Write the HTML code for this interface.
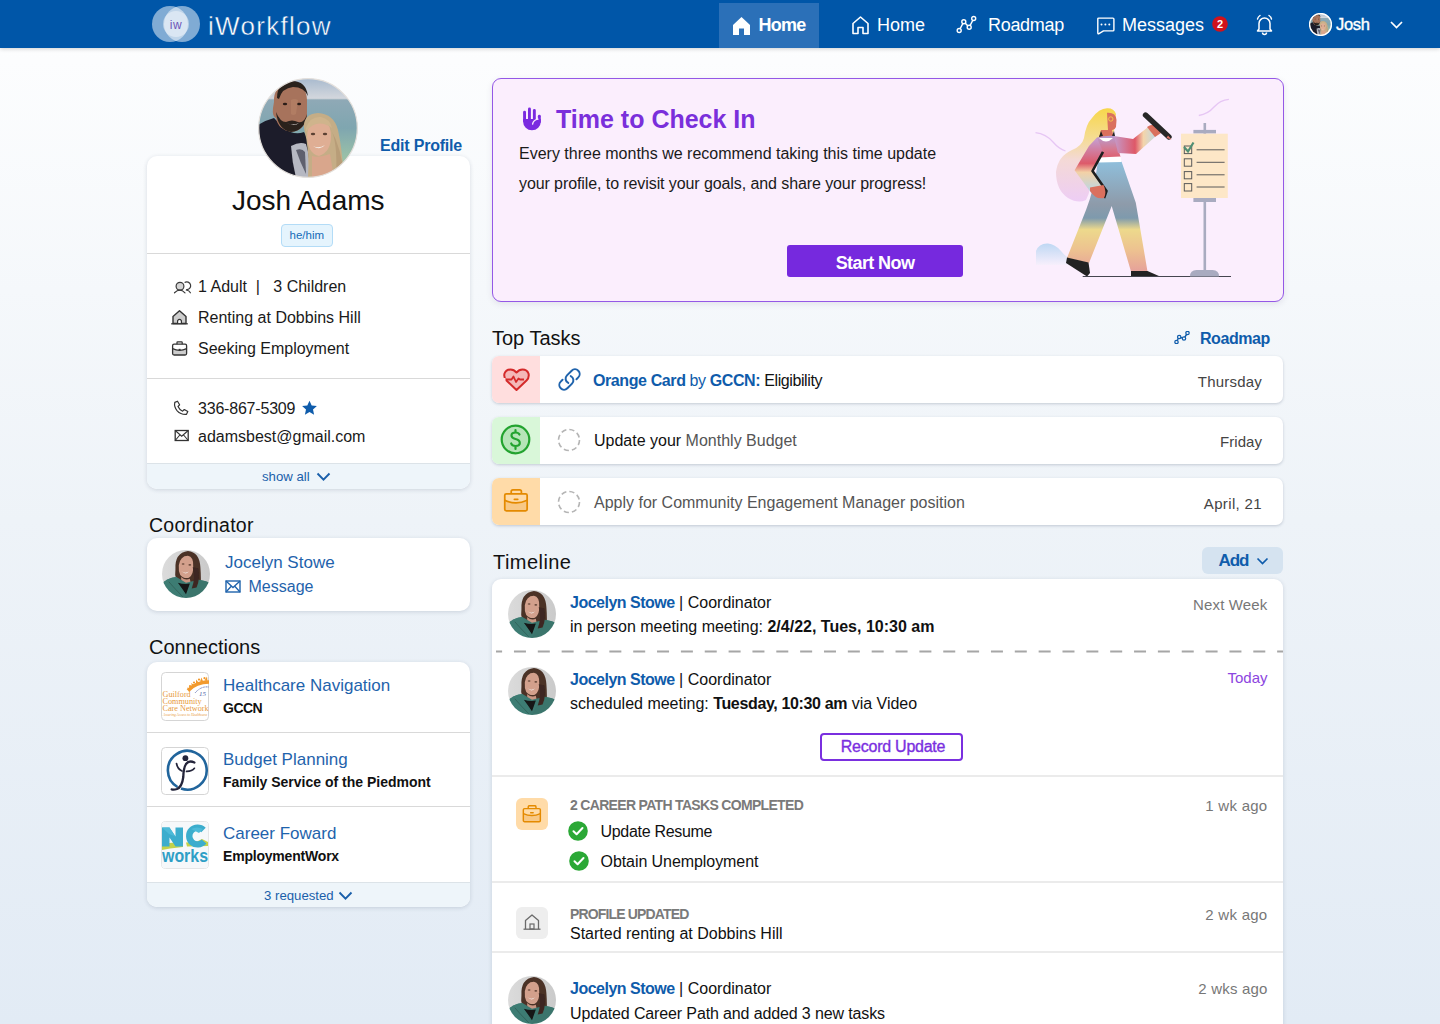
<!DOCTYPE html>
<html><head><meta charset="utf-8"><title>iWorkflow</title>
<style>
html,body{margin:0;padding:0;}
body{width:1440px;height:1024px;overflow:hidden;position:relative;font-family:"Liberation Sans", sans-serif;
background:linear-gradient(180deg,#FFFFFF 0px,#FCFDFE 60px,#EEF3F8 520px,#E2EBF5 1024px);}
.t{position:absolute;white-space:nowrap;line-height:1;}
.card{position:absolute;background:#fff;border-radius:10px;box-shadow:0 1px 4px rgba(30,50,80,0.16);overflow:hidden;}
</style></head><body>

<div style="position:absolute;left:0px;top:0px;width:1440px;height:48px;background:#0056A8;box-shadow:0 1px 4px rgba(0,0,0,0.18);"></div>
<svg style="position:absolute;left:150px;top:4px;" width="54" height="40" viewBox="0 0 54 40">
<circle cx="20" cy="20" r="18" fill="#fff" fill-opacity="0.5"/>
<circle cx="32" cy="20" r="18" fill="#fff" fill-opacity="0.5"/>
<circle cx="26" cy="20" r="13" fill="#fff" fill-opacity="0.42"/>
<text x="26" y="24.5" text-anchor="middle" font-family="Liberation Sans" font-size="12" fill="#6E56B8" letter-spacing="0.5">iw</text>
</svg>
<div class="t" style="top:12.99px;font-size:26px;font-weight:400;color:#FFFFFF;letter-spacing:1.3px;left:208px;-webkit-text-stroke:0.45px #0056A8;">iWorkflow</div>
<div style="position:absolute;left:719px;top:3px;width:100px;height:45px;background:#2B70B8;"></div>
<svg style="position:absolute;left:733px;top:17px;" width="17" height="18" viewBox="0 0 17 18"><path d="M8.5 0 L17 8 V18 H11 V11.5 H6 V18 H0 V8 Z" fill="#fff"/></svg>
<div class="t" style="top:16.36px;font-size:18px;font-weight:700;color:#fff;letter-spacing:-0.75px;left:758.5px;">Home</div>
<svg style="position:absolute;left:851px;top:15px;" width="19" height="20" viewBox="0 0 19 20"><path d="M2 8.5 L9.5 2 L17 8.5 V18.5 H12 V12.5 H7 V18.5 H2 Z" fill="none" stroke="#fff" stroke-width="1.6" stroke-linejoin="round"/></svg>
<div class="t" style="top:16.36px;font-size:18px;font-weight:400;color:#fff;left:877px;">Home</div>
<svg style="position:absolute;left:955px;top:15px;" width="22" height="20" viewBox="0 0 22 20"><polyline points="4.2,15.5 8.8,6.7 14.2,12.3 18.7,3.5" fill="none" stroke="#fff" stroke-width="1.5"/>
<circle cx="4.2" cy="15.5" r="2" fill="#0056A8" stroke="#fff" stroke-width="1.4"/>
<circle cx="8.8" cy="6.7" r="2" fill="#0056A8" stroke="#fff" stroke-width="1.4"/>
<circle cx="14.2" cy="12.3" r="2" fill="#0056A8" stroke="#fff" stroke-width="1.4"/>
<circle cx="18.7" cy="3.5" r="2" fill="#0056A8" stroke="#fff" stroke-width="1.4"/></svg>
<div class="t" style="top:16.36px;font-size:18px;font-weight:400;color:#fff;letter-spacing:-0.3px;left:988px;">Roadmap</div>
<svg style="position:absolute;left:1096px;top:16px;" width="19" height="19" viewBox="0 0 19 19"><path d="M1.8 3.1 Q1.8 2.1 2.8 2.1 H16.9 Q17.9 2.1 17.9 3.1 V13.9 Q17.9 14.9 16.9 14.9 H7.5 L3 17.6 Q1.8 18.2 1.8 17 Z" fill="none" stroke="#fff" stroke-width="1.4" stroke-linejoin="round"/>
<circle cx="5.5" cy="8.5" r="1" fill="#fff"/><circle cx="9.4" cy="8.5" r="1" fill="#fff"/><circle cx="13.3" cy="8.5" r="1" fill="#fff"/></svg>
<div class="t" style="top:16.36px;font-size:18px;font-weight:400;color:#fff;left:1122px;">Messages</div>
<svg style="position:absolute;left:1212px;top:16px;" width="16" height="16" viewBox="0 0 16 16"><circle cx="8" cy="8" r="7.8" fill="#D0121B"/><text x="8" y="12" text-anchor="middle" font-family="Liberation Sans" font-weight="700" font-size="11" fill="#fff">2</text></svg>
<svg style="position:absolute;left:1254px;top:14px;" width="21" height="22" viewBox="0 0 21 22"><path d="M5 15 V9.5 A5.5 5.5 0 0 1 16 9.5 V15 L17.5 17 H3.5 Z" fill="none" stroke="#fff" stroke-width="1.5" stroke-linejoin="round"/>
<path d="M8.5 18.5 A2 2 0 0 0 12.5 18.5" fill="none" stroke="#fff" stroke-width="1.5"/>
<path d="M3.5 5 A6 6 0 0 1 6 1.5 M17.5 5 A6 6 0 0 0 15 1.5" fill="none" stroke="#fff" stroke-width="1.4" stroke-linecap="round"/></svg>
<svg style="position:absolute;left:1308.5px;top:12.5px;" width="23" height="23" viewBox="0 0 100 100"><defs><clipPath id="cjs"><circle cx="50" cy="50" r="49.5"/></clipPath><filter id="fbs" x="-5%" y="-5%" width="110%" height="110%"><feGaussianBlur stdDeviation="0.55"/></filter>
<linearGradient id="skys" x1="0" y1="0" x2="0" y2="1"><stop offset="0" stop-color="#9DB2CA"/><stop offset="0.23" stop-color="#D3D7DD"/><stop offset="0.245" stop-color="#8FA9B6"/><stop offset="0.5" stop-color="#7FA6B0"/><stop offset="0.75" stop-color="#98BFA8"/><stop offset="1" stop-color="#A8CBA9"/></linearGradient></defs>
<g clip-path="url(#cjs)"><g filter="url(#fbs)">
<rect x="-5" y="-5" width="110" height="110" fill="url(#skys)"/>
<path d="M0 47 Q8 42 16 40 L26 50 Q36 58 46 54 L50 62 Q53 80 53 100 H0 Z" fill="#1D1C2A"/>
<path d="M33 68 Q42 63 48 66 Q52 78 52 100 H38 Q34 84 33 68 Z" fill="#B6B8C2"/>
<path d="M38 72 Q44 70 47 74 L48 96 Q42 84 38 72 Z" fill="#5E606E"/>
<path d="M16 24 Q15 8 32 4 Q48 4 49 22 L49 38 Q47 52 34 54 Q20 52 18 40 Q14 38 15 30 Z" fill="#A7735B"/>
<path d="M19 20 Q19 4 34 3 Q48 3 50 18 Q46 9 35 9 Q24 10 21 21 Z" fill="#2B221E"/>
<path d="M18 34 Q20 52 33 54 Q47 53 49 36 Q46 46 40 44 Q34 41 28 44 Q22 44 18 34 Z" fill="#2B231F"/>
<path d="M29 45 Q34 48 41 45 Q36 49 29 45 Z" fill="#F2EEE8"/>
<path d="M46 50 Q45 36 60 35 Q76 36 80 52 Q84 70 86 100 H50 Q52 74 46 50 Z" fill="#C5AD86"/>
<path d="M49 58 Q50 42 61 42 Q73 43 73 58 Q73 74 61 78 Q50 76 49 58 Z" fill="#DFAE94"/>
<path d="M48 50 Q52 38 63 39 Q72 41 74 50 Q66 44 58 46 Q52 48 48 54 Z" fill="#CFB48C"/>
<path d="M55 68 Q61 71 67 67 Q62 73 55 68 Z" fill="#F5F0EC"/>
<path d="M54 78 Q61 80 72 76 L76 100 H54 Z" fill="#D9A68C"/>
<path d="M72 50 Q80 62 78 100 H86 Q84 70 72 50 Z" fill="#B89D78"/>
<ellipse cx="27" cy="26" rx="2.2" ry="1.3" fill="#2A1E18"/><ellipse cx="41" cy="26" rx="2.2" ry="1.3" fill="#2A1E18"/>
<ellipse cx="55" cy="56" rx="2.2" ry="1.2" fill="#5A3F30"/><ellipse cx="67" cy="56" rx="2.2" ry="1.2" fill="#5A3F30"/>
<path d="M33 22 Q36 20 40 22 L38 36 Q35 38 33 36 Z" fill="#B8846A" opacity="0.6"/>
</g></g><circle cx="50" cy="50" r="49.3" fill="none" stroke="#E4E0DC" stroke-width="1.2"/><circle cx="50" cy="50" r="47.5" fill="none" stroke="#fff" stroke-width="6"/></svg>
<div class="t" style="top:16.23px;font-size:16.5px;font-weight:400;color:#fff;letter-spacing:-0.3px;left:1336px;-webkit-text-stroke:0.4px #fff;">Josh</div>
<svg style="position:absolute;left:1389px;top:20px;" width="15" height="10" viewBox="0 0 15 10"><polyline points="2,2 7.5,7.5 13,2" fill="none" stroke="#fff" stroke-width="1.7"/></svg>
<div class="card" style="left:147px;top:156px;width:323px;height:333px;"></div>
<div style="position:absolute;left:147px;top:463px;width:323px;height:26px;background:#EEF5FA;border-top:1px solid #DCE3E8;border-radius:0 0 10px 10px;box-sizing:border-box;"></div>
<div style="position:absolute;left:147px;top:253px;width:323px;height:1px;background:#D9D9D9;"></div>
<div style="position:absolute;left:147px;top:378px;width:323px;height:1px;background:#D9D9D9;"></div>
<svg style="position:absolute;left:258px;top:78px;" width="100" height="100" viewBox="0 0 100 100"><defs><clipPath id="cjb"><circle cx="50" cy="50" r="49.5"/></clipPath><filter id="fbb" x="-5%" y="-5%" width="110%" height="110%"><feGaussianBlur stdDeviation="0.55"/></filter>
<linearGradient id="skyb" x1="0" y1="0" x2="0" y2="1"><stop offset="0" stop-color="#9DB2CA"/><stop offset="0.23" stop-color="#D3D7DD"/><stop offset="0.245" stop-color="#8FA9B6"/><stop offset="0.5" stop-color="#7FA6B0"/><stop offset="0.75" stop-color="#98BFA8"/><stop offset="1" stop-color="#A8CBA9"/></linearGradient></defs>
<g clip-path="url(#cjb)"><g filter="url(#fbb)">
<rect x="-5" y="-5" width="110" height="110" fill="url(#skyb)"/>
<path d="M0 47 Q8 42 16 40 L26 50 Q36 58 46 54 L50 62 Q53 80 53 100 H0 Z" fill="#1D1C2A"/>
<path d="M33 68 Q42 63 48 66 Q52 78 52 100 H38 Q34 84 33 68 Z" fill="#B6B8C2"/>
<path d="M38 72 Q44 70 47 74 L48 96 Q42 84 38 72 Z" fill="#5E606E"/>
<path d="M16 24 Q15 8 32 4 Q48 4 49 22 L49 38 Q47 52 34 54 Q20 52 18 40 Q14 38 15 30 Z" fill="#A7735B"/>
<path d="M19 20 Q19 4 34 3 Q48 3 50 18 Q46 9 35 9 Q24 10 21 21 Z" fill="#2B221E"/>
<path d="M18 34 Q20 52 33 54 Q47 53 49 36 Q46 46 40 44 Q34 41 28 44 Q22 44 18 34 Z" fill="#2B231F"/>
<path d="M29 45 Q34 48 41 45 Q36 49 29 45 Z" fill="#F2EEE8"/>
<path d="M46 50 Q45 36 60 35 Q76 36 80 52 Q84 70 86 100 H50 Q52 74 46 50 Z" fill="#C5AD86"/>
<path d="M49 58 Q50 42 61 42 Q73 43 73 58 Q73 74 61 78 Q50 76 49 58 Z" fill="#DFAE94"/>
<path d="M48 50 Q52 38 63 39 Q72 41 74 50 Q66 44 58 46 Q52 48 48 54 Z" fill="#CFB48C"/>
<path d="M55 68 Q61 71 67 67 Q62 73 55 68 Z" fill="#F5F0EC"/>
<path d="M54 78 Q61 80 72 76 L76 100 H54 Z" fill="#D9A68C"/>
<path d="M72 50 Q80 62 78 100 H86 Q84 70 72 50 Z" fill="#B89D78"/>
<ellipse cx="27" cy="26" rx="2.2" ry="1.3" fill="#2A1E18"/><ellipse cx="41" cy="26" rx="2.2" ry="1.3" fill="#2A1E18"/>
<ellipse cx="55" cy="56" rx="2.2" ry="1.2" fill="#5A3F30"/><ellipse cx="67" cy="56" rx="2.2" ry="1.2" fill="#5A3F30"/>
<path d="M33 22 Q36 20 40 22 L38 36 Q35 38 33 36 Z" fill="#B8846A" opacity="0.6"/>
</g></g><circle cx="50" cy="50" r="49.3" fill="none" stroke="#E4E0DC" stroke-width="1.2"/></svg>
<div class="t" style="top:138.46px;font-size:16px;font-weight:700;color:#0F5CAB;letter-spacing:-0.2px;left:380px;">Edit Profile</div>
<div class="t" style="top:187.30px;font-size:28px;font-weight:400;color:#111;left:232px;">Josh Adams</div>
<div style="position:absolute;left:281px;top:224px;width:51.5px;height:23px;background:#E5F4FD;border:1px solid #B3DCF7;border-radius:4px;box-sizing:border-box;"></div>
<div class="t" style="top:230.27px;font-size:11.5px;font-weight:400;color:#156BB8;left:306.8px;transform:translateX(-50%);">he/him</div>
<svg style="position:absolute;left:172px;top:280px;" width="20" height="15" viewBox="0 0 20 15"><circle cx="8" cy="6.2" r="3.9" fill="#D4D4D4" stroke="#3A3A3A" stroke-width="1.2"/>
<path d="M2.5 12.8 Q7.8 7.6 13 12.8" fill="none" stroke="#3A3A3A" stroke-width="1.2" stroke-linecap="round"/>
<path d="M12.6 2.5 A3.9 3.9 0 1 1 14.2 9.6" fill="none" stroke="#3A3A3A" stroke-width="1.2"/>
<path d="M14.3 10 Q17.2 10.4 18.4 12.8" fill="none" stroke="#3A3A3A" stroke-width="1.2" stroke-linecap="round"/></svg>
<div class="t" style="top:279.46px;font-size:16px;font-weight:400;color:#1A1A1A;left:198px;">1 Adult&nbsp;&nbsp;|&nbsp;&nbsp;&nbsp;3 Children</div>
<svg style="position:absolute;left:170px;top:309px;" width="19" height="16" viewBox="0 0 19 16"><path d="M3 14.5 V7.6 L9.5 1.8 L16 7.6 V14.5 Z" fill="#CDCDCD" stroke="#333" stroke-width="1.4" stroke-linejoin="round"/>
<path d="M7.6 14.5 V11.6 Q9.5 9.3 11.4 11.6 V14.5" fill="#fff" stroke="#333" stroke-width="1.2"/>
<line x1="1.2" y1="14.8" x2="17.8" y2="14.8" stroke="#333" stroke-width="1.3"/></svg>
<div class="t" style="top:310.46px;font-size:16px;font-weight:400;color:#1A1A1A;left:198px;">Renting at Dobbins Hill</div>
<svg style="position:absolute;left:171px;top:341px;" width="17" height="15" viewBox="0 0 17 15"><rect x="1.6" y="3.2" width="14" height="10.8" rx="1.5" fill="#fff"/>
<path d="M1.6 7.6 Q8.6 11 15.6 7.6 V13 Q15.6 14 14.6 14 H2.6 Q1.6 14 1.6 13 Z" fill="#CDCDCD"/>
<rect x="1.6" y="3.2" width="14" height="10.8" rx="1.5" fill="none" stroke="#333" stroke-width="1.3"/>
<path d="M1.6 7.6 Q8.6 11 15.6 7.6" fill="none" stroke="#333" stroke-width="1.2"/>
<path d="M6 3.2 V1.3 Q6 0.8 6.6 0.8 H10.6 Q11.2 0.8 11.2 1.3 V3.2" fill="none" stroke="#333" stroke-width="1.2"/>
<line x1="7.6" y1="8.6" x2="9.6" y2="8.6" stroke="#333" stroke-width="1.5"/></svg>
<div class="t" style="top:341.46px;font-size:16px;font-weight:400;color:#1A1A1A;left:198px;">Seeking Employment</div>
<svg style="position:absolute;left:173px;top:400px;" width="16" height="16" viewBox="0 0 16 16"><path d="M4.5 1.2 L6.6 4.8 L5 6.5 Q6.5 9.8 9.6 11.2 L11.3 9.5 L14.8 11.6 L13.5 14.3 Q8 14.8 4.2 10.8 Q0.8 6.8 1.8 2.4 Z" fill="none" stroke="#333" stroke-width="1.2" stroke-linejoin="round"/></svg>
<div class="t" style="top:401.46px;font-size:16px;font-weight:400;color:#1A1A1A;letter-spacing:-0.2px;left:198px;">336-867-5309</div>
<svg style="position:absolute;left:301px;top:400px;" width="17" height="16" viewBox="0 0 17 16"><path d="M8.5 0.8 L10.7 5.6 L15.9 6.1 L12 9.6 L13.1 14.8 L8.5 12.1 L3.9 14.8 L5 9.6 L1.1 6.1 L6.3 5.6 Z" fill="#0F5CAB"/></svg>
<svg style="position:absolute;left:174px;top:429px;" width="16" height="13" viewBox="0 0 16 13"><rect x="1.2" y="1.5" width="13" height="10" fill="none" stroke="#333" stroke-width="1.3"/>
<path d="M1.2 1.5 L7.7 7.2 L14.2 1.5 M1.2 11.5 L5.8 6 M14.2 11.5 L9.6 6" fill="none" stroke="#333" stroke-width="1.1"/></svg>
<div class="t" style="top:429.46px;font-size:16px;font-weight:400;color:#1A1A1A;left:198px;">adamsbest@gmail.com</div>
<div class="t" style="top:469.83px;font-size:13.2px;font-weight:400;color:#1A5FAA;left:262px;">show all</div>
<svg style="position:absolute;left:316px;top:472px;" width="15" height="10" viewBox="0 0 15 10"><polyline points="1.5,1.5 7.5,7.6 13.5,1.5" fill="none" stroke="#1A5FAA" stroke-width="1.9"/></svg>
<div class="t" style="top:516.49px;font-size:19.5px;font-weight:400;color:#111;letter-spacing:0.25px;left:149px;">Coordinator</div>
<div class="card" style="left:147px;top:538px;width:323px;height:73px;"></div>
<svg style="position:absolute;left:162px;top:550px;" width="48" height="48" viewBox="0 0 100 100"><defs><clipPath id="cc1"><circle cx="50" cy="50" r="50"/></clipPath><filter id="fj1" x="-5%" y="-5%" width="110%" height="110%"><feGaussianBlur stdDeviation="0.55"/></filter>
<linearGradient id="jbg1" x1="0" y1="0" x2="1" y2="0"><stop offset="0" stop-color="#DCDCDC"/><stop offset="1" stop-color="#C9C9C9"/></linearGradient></defs>
<g clip-path="url(#cc1)"><g filter="url(#fj1)">
<rect x="-5" y="-5" width="110" height="110" fill="url(#jbg1)"/>
<path d="M28 40 Q26 6 54 2 Q78 4 80 36 Q82 62 80 80 L62 78 Q50 70 40 66 L30 62 Q26 52 28 40 Z" fill="#4B3227"/>
<path d="M35 32 Q38 12 54 12 Q66 14 65 34 Q66 52 56 58 Q44 60 38 52 Q34 44 35 32 Z" fill="#D3A08C"/>
<path d="M40 44 Q48 50 56 45 Q50 53 40 44 Z" fill="#F4EDEA"/>
<ellipse cx="44" cy="29" rx="3" ry="1.6" fill="#6B4A3C"/><ellipse cx="58" cy="31" rx="3" ry="1.6" fill="#6B4A3C"/>
<path d="M40 56 Q48 64 58 60 L60 70 L40 70 Z" fill="#C89582"/>
<path d="M0 100 V70 Q10 58 30 56 L50 68 L76 62 Q90 64 100 68 V100 Z" fill="#3C7870"/>
<path d="M0 70 Q10 58 30 56 L40 70 L46 100 H0 Z" fill="#3E7C73"/>
<path d="M100 68 Q90 64 76 62 L62 76 L50 100 H100 Z" fill="#3A746C"/>
<path d="M33 68 Q46 72 58 70 L50 92 Q42 80 33 68 Z" fill="#121212"/>
<path d="M64 36 Q70 60 62 80 L72 78 Q80 60 76 38 Z" fill="#3D2820"/>
<path d="M14 66 Q26 80 44 98" stroke="#2C5A54" stroke-width="1.5" fill="none"/>
</g></g></svg>
<div class="t" style="top:553.61px;font-size:17px;font-weight:400;color:#1F63AC;left:225px;">Jocelyn Stowe</div>
<svg style="position:absolute;left:225px;top:580px;" width="16" height="13" viewBox="0 0 16 13"><rect x="1" y="1" width="14" height="11" fill="none" stroke="#1F63AC" stroke-width="1.4"/>
<path d="M1 1 L8 7.5 L15 1 M1 12 L6 6.5 M15 12 L10 6.5" fill="none" stroke="#1F63AC" stroke-width="1.3"/></svg>
<div class="t" style="top:579.46px;font-size:16px;font-weight:400;color:#1F63AC;left:248.5px;">Message</div>
<div class="t" style="top:637.37px;font-size:20px;font-weight:400;color:#111;left:149px;">Connections</div>
<div class="card" style="left:147px;top:662px;width:323px;height:245px;"></div>
<div style="position:absolute;left:147px;top:882px;width:323px;height:25px;background:#EEF5FA;border-top:1px solid #DCE3E8;border-radius:0 0 10px 10px;box-sizing:border-box;"></div>
<div style="position:absolute;left:147px;top:732px;width:323px;height:1px;background:#D9D9D9;"></div>
<div style="position:absolute;left:147px;top:806px;width:323px;height:1px;background:#D9D9D9;"></div>
<svg style="position:absolute;left:161px;top:672px;" width="48" height="49" viewBox="0 0 48 49"><rect x="0.5" y="0.5" width="47" height="48" rx="4" fill="#fff" stroke="#D5D5D5"/>
<path d="M27 18.5 Q35 10 48 10" fill="none" stroke="#F29A2E" stroke-width="3.6"/>
<g fill="#F29A2E"><path d="M26 15.5 L30 17 L28 19 Z"/><path d="M30 11 L34 13.5 L31.5 15 Z"/><path d="M35 7.5 L38 11 L35 12 Z"/><path d="M40.5 5.5 L42 9.5 L39 9.5 Z"/><path d="M46 4.5 L46.5 9 L43.5 8.5 Z"/>
<circle cx="29" cy="14.2" r="1.1"/><circle cx="33" cy="10.5" r="1.1"/><circle cx="38" cy="7.6" r="1.1"/><circle cx="43.5" cy="6.2" r="1.1"/></g>
<path d="M34 21 Q40 14 47.5 15" fill="none" stroke="#5563A8" stroke-width="0.9" stroke-dasharray="1 0.6"/>
<text x="41.5" y="23.5" text-anchor="middle" font-family="Liberation Serif" font-style="italic" font-size="7" fill="#4B5DA8">15</text>
<g font-family="Liberation Serif" font-size="8.2" fill="#E79A3C">
<text x="1.5" y="25">Guilford</text><text x="1.5" y="32">Community</text><text x="1.5" y="39">Care Network</text></g>
<text x="2" y="43.5" font-family="Liberation Serif" font-style="italic" font-size="3.2" fill="#E79A3C" textLength="44" lengthAdjust="spacingAndGlyphs">Assuring Access to Healthcare</text></svg>
<div class="t" style="top:676.61px;font-size:17px;font-weight:400;color:#1F63AC;left:223px;">Healthcare Navigation</div>
<div class="t" style="top:701.45px;font-size:14px;font-weight:700;color:#111;letter-spacing:-0.5px;left:223px;">GCCN</div>
<svg style="position:absolute;left:161px;top:747px;" width="48" height="48" viewBox="0 0 48 48"><rect x="0.5" y="0.5" width="47" height="47" rx="4" fill="#fff" stroke="#D5D5D5"/>
<path d="M16.5 40 A19.4 19.4 0 1 1 20 41.6" fill="none" stroke="#21659C" stroke-width="2.6"/>
<circle cx="24.4" cy="11.2" r="2.9" fill="#23243A"/>
<path d="M15.5 16.5 Q16.5 22 21 24" fill="none" stroke="#23243A" stroke-width="1.7" stroke-linecap="round"/>
<path d="M25.5 24.4 Q31 24.5 33.4 21.3" fill="none" stroke="#23243A" stroke-width="1.7" stroke-linecap="round"/>
<path d="M33.4 15.5 Q28 13 25 17 Q22.5 21 22.3 30 Q21 40 16 42 Q13 43 10.7 42.4" fill="none" stroke="#23243A" stroke-width="2.3" stroke-linecap="round"/></svg>
<div class="t" style="top:750.61px;font-size:17px;font-weight:400;color:#1F63AC;left:223px;">Budget Planning</div>
<div class="t" style="top:775.45px;font-size:14px;font-weight:700;color:#111;left:223px;">Family Service of the Piedmont</div>
<svg style="position:absolute;left:161px;top:821px;" width="48" height="48" viewBox="0 0 48 48"><defs><clipPath id="ncc"><rect x="0.5" y="0.5" width="47" height="47" rx="4"/></clipPath></defs>
<rect x="0.5" y="0.5" width="47" height="47" rx="4" fill="#fff" stroke="#D5D5D5"/>
<g clip-path="url(#ncc)">
<rect x="0" y="0" width="48" height="48" fill="#F6F8FA"/>
<path d="M1 22.5 L22 21 L22 26 L9 27.5 L1 29 Z" fill="#C3D24A"/>
<path d="M25 21.5 L36 20.5 L41 18 L47 21 L47 25 L26 25.5 Z" fill="#C3D24A"/>
<path d="M1 6.5 H8.5 L14.5 15.5 V6.5 H22 V25.5 H14.5 L8.5 16.5 V25.5 H1 Z" fill="#3CADCD"/>
<path d="M1 6.5 H8.5 L14.5 15.5 L8 13 Z" fill="#4DBAD8"/>
<path d="M42.5 9 A8.4 8.4 0 1 0 43 20.5" fill="none" stroke="#3CADCD" stroke-width="6.4"/>
<path d="M30 8 Q36 5 42 8 L38 12 Z" fill="#4DBAD8"/>
<text x="1" y="41" font-family="Liberation Sans" font-weight="700" font-size="18.5" fill="#2E9FC6" textLength="46" lengthAdjust="spacingAndGlyphs">works</text></g></svg>
<div class="t" style="top:824.61px;font-size:17px;font-weight:400;color:#1F63AC;left:223px;">Career Foward</div>
<div class="t" style="top:849.45px;font-size:14px;font-weight:700;color:#111;letter-spacing:-0.2px;left:223px;">EmploymentWorx</div>
<div class="t" style="top:888.63px;font-size:13.2px;font-weight:400;color:#1A5FAA;left:264px;">3 requested</div>
<svg style="position:absolute;left:338px;top:891px;" width="15" height="10" viewBox="0 0 15 10"><polyline points="1.5,1.5 7.5,7.6 13.5,1.5" fill="none" stroke="#1A5FAA" stroke-width="1.9"/></svg>
<div style="position:absolute;left:492px;top:78px;width:792px;height:224px;background:#FBEEFD;border:1.8px solid #9458E6;border-radius:9px;box-sizing:border-box;box-shadow:0 2px 6px rgba(60,40,90,0.10);"></div>
<svg style="position:absolute;left:520px;top:106px;" width="23" height="26" viewBox="0 0 23 26"><g stroke="#7A2AE0" stroke-width="2.9" stroke-linecap="round"><line x1="4.55" y1="6.3" x2="4.55" y2="15"/><line x1="9.45" y1="2.9" x2="9.45" y2="14"/><line x1="14.35" y1="4.4" x2="14.35" y2="14"/><line x1="19.35" y1="10.3" x2="19.35" y2="16"/></g>
<path d="M3.1 13 L3.1 15.4 A8.85 8.85 0 0 0 20.8 15.4 L20.8 13 Z" fill="#7A2AE0"/>
<path d="M18 13.2 Q13.2 14.2 12.6 18.2" fill="none" stroke="#FBEEFD" stroke-width="1.3" stroke-linecap="round"/></svg>
<div class="t" style="top:107.14px;font-size:25px;font-weight:700;color:#7A2FDB;left:556px;">Time to Check In</div>
<div class="t" style="top:146.46px;font-size:16px;font-weight:400;color:#1A1A1A;left:519px;">Every three months we recommend taking this time update</div>
<div class="t" style="top:176.46px;font-size:16px;font-weight:400;color:#1A1A1A;letter-spacing:-0.09px;left:519px;">your profile, to revisit your goals, and share your progress!</div>
<div style="position:absolute;left:787px;top:245px;width:176px;height:32px;background:#7629DE;border-radius:3px;"></div>
<div class="t" style="top:254.16px;font-size:18px;font-weight:700;color:#fff;letter-spacing:-0.6px;left:875px;transform:translateX(-50%);">Start Now</div>
<svg style="position:absolute;left:1030px;top:90px;" width="210" height="195" viewBox="1030 90 210 195"><defs>
<linearGradient id="gPants" x1="0" y1="160" x2="0" y2="276" gradientUnits="userSpaceOnUse">
<stop offset="0" stop-color="#8FC0DD"/><stop offset="0.38" stop-color="#8E9BAA"/><stop offset="0.5" stop-color="#7E9AAD"/>
<stop offset="0.6" stop-color="#EDD98C"/><stop offset="0.78" stop-color="#EDC190"/><stop offset="1" stop-color="#E49A9C"/></linearGradient>
<linearGradient id="gTop" x1="0" y1="136" x2="0" y2="160" gradientUnits="userSpaceOnUse">
<stop offset="0" stop-color="#B79BD0"/><stop offset="0.55" stop-color="#D67990"/><stop offset="1" stop-color="#DE5A69"/></linearGradient>
<linearGradient id="gLArm" x1="0" y1="140" x2="0" y2="192" gradientUnits="userSpaceOnUse">
<stop offset="0" stop-color="#C79ACB"/><stop offset="0.45" stop-color="#DD5A6A"/><stop offset="0.62" stop-color="#F3D1A6"/><stop offset="1" stop-color="#B9D7E8"/></linearGradient>
<linearGradient id="gArm" x1="1114" y1="0" x2="1156" y2="0" gradientUnits="userSpaceOnUse">
<stop offset="0" stop-color="#C59AC9"/><stop offset="0.5" stop-color="#DE5868"/><stop offset="0.7" stop-color="#F4D4AA"/><stop offset="1" stop-color="#BFD9E5"/></linearGradient>
<linearGradient id="gHair" x1="0" y1="108" x2="0" y2="202" gradientUnits="userSpaceOnUse">
<stop offset="0" stop-color="#F7D64A"/><stop offset="0.3" stop-color="#F5DC8E"/><stop offset="0.55" stop-color="#F4D9D6"/><stop offset="1" stop-color="#EDCDF5"/></linearGradient>
<linearGradient id="gCloud" x1="0" y1="243" x2="0" y2="265" gradientUnits="userSpaceOnUse">
<stop offset="0" stop-color="#BDD7F3"/><stop offset="1" stop-color="#F7EFFC"/></linearGradient>
</defs>
<path d="M1035.5 132.7 Q1046 134 1053 142 Q1059 149 1065.5 151" fill="none" stroke="#E6C6F4" stroke-width="1.3"/>
<path d="M1198.8 115.5 Q1208 114 1214 107 Q1220 100 1228.9 99.3" fill="none" stroke="#E6C6F4" stroke-width="1.3"/>
<path d="M1036 265 V251 Q1039 243 1048 243.5 Q1055 244 1061 251 Q1065 256 1070 259 V265 Z" fill="url(#gCloud)"/>
<path d="M1107 108.3 Q1114 108 1116 114 L1114 132 Q1100 140 1094 150 Q1090 158 1090 170 Q1092 190 1086 200 Q1078 204 1068 198 Q1056 190 1056 172 Q1058 156 1072 150 Q1082 146 1084 138 Q1086 124 1092 118 Q1099 108.5 1107 108.3 Z" fill="url(#gHair)"/>
<path d="M1107 112.7 Q1116 112 1116.5 120 L1116 127 Q1114 131 1108 130.3 Z" fill="#DA705E"/>
<circle cx="1110.8" cy="119" r="2.2" fill="none" stroke="#F4C94A" stroke-width="0.9"/>
<path d="M1101 130 L1112 130 L1114 138 L1099 138 Z" fill="#DA705E"/>
<path d="M1101 131 L1099 137 L1103 136 Z M1112 136 L1114 131 L1115 136 Z" fill="#222"/>
<path d="M1097 137.5 Q1106 135 1115 136 L1120.5 157 L1099 159 Q1092 150 1097 137.5 Z" fill="url(#gTop)"/>
<path d="M1099 138 Q1106 145 1113 138 Z" fill="#FFFFFF"/>
<path d="M1114 136 L1133 139 L1147.5 127.5 L1156 136 L1136 154 L1118 153 Z" fill="url(#gArm)"/>
<path d="M1147 127 Q1152 123 1160 126 L1161 133 L1155 137 Z" fill="#DA705E"/>
<line x1="1145.5" y1="115" x2="1169" y2="137" stroke="#272727" stroke-width="5.4" stroke-linecap="round"/>
<path d="M1168 135.5 L1171.5 139.5 L1166.5 138 Z" fill="#E0776A"/>
<path d="M1098 161.5 H1121.5 L1135.8 202.7 L1147.5 271.5 L1131 271.5 L1111.7 206 L1089 263 L1067 258 L1086 210 Q1094 190 1098 161.5 Z" fill="url(#gPants)"/>
<path d="M1098.5 157.6 L1120.5 156.6 L1121.5 162 L1098.5 162.5 Z" fill="#FFFFFF"/>
<path d="M1097 137.5 L1089 146 L1074.6 170.3 L1091 192.8 L1104 186 L1092 171 L1103 151.8 Z" fill="url(#gLArm)"/>
<polyline points="1103,151.8 1092.5,171 1106.5,191 1104,198" fill="none" stroke="#1F1F1F" stroke-width="2.6" stroke-linejoin="round"/>
<path d="M1090 187.5 L1103.5 185 Q1107 192 1104 198 Q1096 200 1090 191 Z" fill="#DA705E"/>
<path d="M1067 257.5 L1088.5 262.5 L1090 273 L1087 276.5 L1066 263 Z" fill="#222222"/>
<path d="M1131 271 L1147.5 271 L1160 276.5 H1131 Z" fill="#222222"/>
<line x1="1082.7" y1="276.5" x2="1231" y2="276.5" stroke="#45454F" stroke-width="1"/>
<rect x="1203.5" y="123" width="2.6" height="150" fill="#A9ABC0"/>
<rect x="1193.4" y="129.9" width="22.6" height="3.6" fill="#A9ABC0"/>
<rect x="1193.4" y="198" width="22.6" height="4" fill="#A9ABC0"/>
<path d="M1190 276.5 Q1190 270 1196.5 270 H1212.5 Q1219 270 1219 276.5 Z" fill="#A9ABC0"/>
<rect x="1181" y="133.7" width="46.8" height="64.3" fill="#FDE7C7"/>
<g fill="none" stroke="#5A5A5A" stroke-width="1">
<rect x="1184.3" y="146" width="7.4" height="7.6"/><rect x="1184.3" y="158.8" width="7.4" height="7.4"/><rect x="1184.3" y="171.6" width="7.4" height="7.2"/><rect x="1184.3" y="183.6" width="7.4" height="7.4"/>
<line x1="1196.6" y1="149.8" x2="1224.6" y2="149.8"/><line x1="1196.6" y1="162.3" x2="1224.6" y2="162.3"/><line x1="1196.6" y1="174.8" x2="1224.6" y2="174.8"/><line x1="1196.6" y1="187" x2="1224.6" y2="187"/></g>
<path d="M1184 147 L1188 151.5 L1193.5 142.5" fill="none" stroke="#4F8F74" stroke-width="2.2"/>
</svg>
<div class="t" style="top:328.07px;font-size:20px;font-weight:400;color:#111;left:492px;">Top Tasks</div>
<svg style="position:absolute;left:1174px;top:331px;" width="16" height="13" viewBox="0 0 16 13"><polyline points="2.5,11 5,6 10,7.5 13.5,2" fill="none" stroke="#0F5CAB" stroke-width="1.4"/>
<circle cx="2.5" cy="11" r="1.7" fill="#F0F4F8" stroke="#0F5CAB" stroke-width="1.2"/><circle cx="5.2" cy="6" r="1.7" fill="#F0F4F8" stroke="#0F5CAB" stroke-width="1.2"/>
<circle cx="10" cy="7.5" r="1.7" fill="#F0F4F8" stroke="#0F5CAB" stroke-width="1.2"/><circle cx="13.5" cy="2" r="1.7" fill="#F0F4F8" stroke="#0F5CAB" stroke-width="1.2"/></svg>
<div class="t" style="top:331.06px;font-size:16px;font-weight:700;color:#0F5CAB;letter-spacing:-0.45px;left:1200px;">Roadmap</div>
<div class="card" style="left:492px;top:356px;width:791px;height:47px;border-radius:7px;box-shadow:0 1px 3px rgba(30,50,80,0.22);"></div>
<div style="position:absolute;left:492px;top:356px;width:48px;height:47px;background:#FFDEDE;border-radius:7px 0 0 7px;"></div>
<svg style="position:absolute;left:503px;top:368px" width="27" height="24" viewBox="0 0 27 24">
<path d="M13.5 22 L3.5 12.5 Q0.5 9.5 1.5 5.5 Q3 1.5 7.5 1.5 Q11 1.5 13.5 4.5 Q16 1.5 19.5 1.5 Q24 1.5 25.5 5.5 Q26.5 9.5 23.5 12.5 Z" fill="#F4B8B8" stroke="#D42A2A" stroke-width="2" stroke-linejoin="round"/>
<polyline points="1,11.5 8.5,11.5 10.5,8.5 13,14 15.5,10.5 17,11.5 21,11.5" fill="none" stroke="#D42A2A" stroke-width="1.8" stroke-linejoin="round"/>
<rect x="0" y="10" width="2.5" height="3" fill="#FFDEDE"/></svg>
<svg style="position:absolute;left:556.5px;top:366.5px" width="25" height="25" viewBox="0 0 24 24">
<path d="M13.19 8.688a4.5 4.5 0 0 1 1.242 7.244l-4.5 4.5a4.5 4.5 0 0 1-6.364-6.364l1.757-1.757m13.35-.622 1.757-1.757a4.5 4.5 0 0 0-6.364-6.364l-4.5 4.5a4.5 4.5 0 0 0 1.242 7.244" fill="none" stroke="#1F63AC" stroke-width="1.9" stroke-linecap="round" stroke-linejoin="round"/></svg>
<div class="t" style="left:593px;top:372.96px;font-size:16px;color:#111;letter-spacing:-0.4px;"><b style="color:#0F5CAB">Orange Card</b> <span style="color:#0F5CAB">by</span> <b style="color:#0F5CAB">GCCN:</b> Eligibility</div>
<div class="t" style="top:373.80px;font-size:15px;font-weight:400;color:#444;letter-spacing:0.2px;right:178px;">Thursday</div>
<div class="card" style="left:492px;top:416.5px;width:791px;height:47px;border-radius:7px;box-shadow:0 1px 3px rgba(30,50,80,0.22);"></div>
<div style="position:absolute;left:492px;top:416.5px;width:48px;height:47px;background:#D9F7D9;border-radius:7px 0 0 7px;"></div>
<svg style="position:absolute;left:500px;top:424px" width="31" height="31" viewBox="0 0 31 31">
<circle cx="15.5" cy="15.5" r="13.8" fill="#B6E5B8" stroke="#23A32F" stroke-width="2.2"/>
<path d="M19.5 10.5 Q18.5 8.5 15.5 8.5 Q11.5 8.5 11.5 11.5 Q11.5 14 15.5 15 Q19.8 16 19.8 19 Q19.8 22 15.5 22 Q12 22 11.2 19.5 M15.5 6 V8.5 M15.5 22 V25" fill="none" stroke="#23A32F" stroke-width="2.2" stroke-linecap="round"/></svg>
<svg style="position:absolute;left:557px;top:427.5px" width="24" height="24" viewBox="0 0 24 24">
<circle cx="12" cy="12" r="10.5" fill="none" stroke="#B5B5B5" stroke-width="1.6" stroke-dasharray="5.2 3.05"/></svg>
<div class="t" style="left:594px;top:432.96px;font-size:16px;color:#111;">Update your <span style="color:#555">Monthly Budget</span></div>
<div class="t" style="top:434.30px;font-size:15px;font-weight:400;color:#444;letter-spacing:0.05px;right:178px;">Friday</div>
<div class="card" style="left:492px;top:478px;width:791px;height:47px;border-radius:7px;box-shadow:0 1px 3px rgba(30,50,80,0.22);"></div>
<div style="position:absolute;left:492px;top:478px;width:48px;height:47px;background:#FFDBA8;border-radius:7px 0 0 7px;"></div>
<svg style="position:absolute;left:503px;top:489px" width="26" height="23" viewBox="0 0 26 23">
<path d="M1.75 11.3 Q13 16.5 24.15 11.3 V21.95 H1.75 Z" fill="#F8C886"/>
<rect x="1.75" y="4.75" width="22.4" height="17.2" rx="1.6" fill="none" stroke="#E48A00" stroke-width="1.75"/>
<path d="M8.2 4.75 V2.6 Q8.2 0.9 9.9 0.9 H16.7 Q18.4 0.9 18.4 2.6 V4.75" fill="none" stroke="#E48A00" stroke-width="1.75"/>
<path d="M1.75 11.3 Q13 16.5 24.15 11.3" fill="none" stroke="#E48A00" stroke-width="1.75"/>
<line x1="11.4" y1="10.3" x2="14.7" y2="10.3" stroke="#E48A00" stroke-width="1.8" stroke-linecap="round"/></svg>
<svg style="position:absolute;left:557px;top:489.5px" width="24" height="24" viewBox="0 0 24 24">
<circle cx="12" cy="12" r="10.5" fill="none" stroke="#B5B5B5" stroke-width="1.6" stroke-dasharray="5.2 3.05"/></svg>
<div class="t" style="left:594px;top:494.96px;font-size:16px;color:#555;">Apply for Community Engagement Manager position</div>
<div class="t" style="top:495.80px;font-size:15px;font-weight:400;color:#444;letter-spacing:0.35px;right:178px;">April, 21</div>
<div class="t" style="top:552.37px;font-size:20px;font-weight:400;color:#111;letter-spacing:0.45px;left:493px;">Timeline</div>
<div style="position:absolute;left:1202px;top:546.5px;width:81px;height:27px;background:#D5E3F0;border-radius:6px;"></div>
<div class="t" style="top:552.11px;font-size:17px;font-weight:700;color:#0F5CAB;letter-spacing:-1.1px;left:1218.5px;">Add</div>
<svg style="position:absolute;left:1256px;top:557px;" width="14" height="9" viewBox="0 0 14 9"><polyline points="1.5,1.5 6.5,6.5 11.5,1.5" fill="none" stroke="#0F5CAB" stroke-width="1.7"/></svg>
<div class="card" style="left:492px;top:579px;width:791px;height:460px;border-radius:9px 9px 0 0;"></div>
<svg style="position:absolute;left:495.8px;top:649.6px;" width="787.2" height="3" viewBox="0 0 787.2 3"><line x1="0" y1="1.5" x2="787.2" y2="1.5" stroke="#A6A6A6" stroke-width="2" stroke-dasharray="12 11.85" stroke-dashoffset="5.9"/></svg>
<div style="position:absolute;left:492px;top:775px;width:791px;height:2px;background:#EBEBEB;"></div>
<div style="position:absolute;left:492px;top:881px;width:791px;height:2px;background:#EBEBEB;"></div>
<div style="position:absolute;left:492px;top:951px;width:791px;height:2px;background:#EBEBEB;"></div>
<svg style="position:absolute;left:508px;top:590px;" width="48" height="48" viewBox="0 0 100 100"><defs><clipPath id="cc2"><circle cx="50" cy="50" r="50"/></clipPath><filter id="fj2" x="-5%" y="-5%" width="110%" height="110%"><feGaussianBlur stdDeviation="0.55"/></filter>
<linearGradient id="jbg2" x1="0" y1="0" x2="1" y2="0"><stop offset="0" stop-color="#DCDCDC"/><stop offset="1" stop-color="#C9C9C9"/></linearGradient></defs>
<g clip-path="url(#cc2)"><g filter="url(#fj2)">
<rect x="-5" y="-5" width="110" height="110" fill="url(#jbg2)"/>
<path d="M28 40 Q26 6 54 2 Q78 4 80 36 Q82 62 80 80 L62 78 Q50 70 40 66 L30 62 Q26 52 28 40 Z" fill="#4B3227"/>
<path d="M35 32 Q38 12 54 12 Q66 14 65 34 Q66 52 56 58 Q44 60 38 52 Q34 44 35 32 Z" fill="#D3A08C"/>
<path d="M40 44 Q48 50 56 45 Q50 53 40 44 Z" fill="#F4EDEA"/>
<ellipse cx="44" cy="29" rx="3" ry="1.6" fill="#6B4A3C"/><ellipse cx="58" cy="31" rx="3" ry="1.6" fill="#6B4A3C"/>
<path d="M40 56 Q48 64 58 60 L60 70 L40 70 Z" fill="#C89582"/>
<path d="M0 100 V70 Q10 58 30 56 L50 68 L76 62 Q90 64 100 68 V100 Z" fill="#3C7870"/>
<path d="M0 70 Q10 58 30 56 L40 70 L46 100 H0 Z" fill="#3E7C73"/>
<path d="M100 68 Q90 64 76 62 L62 76 L50 100 H100 Z" fill="#3A746C"/>
<path d="M33 68 Q46 72 58 70 L50 92 Q42 80 33 68 Z" fill="#121212"/>
<path d="M64 36 Q70 60 62 80 L72 78 Q80 60 76 38 Z" fill="#3D2820"/>
<path d="M14 66 Q26 80 44 98" stroke="#2C5A54" stroke-width="1.5" fill="none"/>
</g></g></svg>
<div class="t" style="left:570px;top:595.46px;font-size:16px;color:#111;"><b style="color:#0F5CAB;letter-spacing:-0.5px">Jocelyn Stowe</b> | Coordinator</div>
<div class="t" style="left:570px;top:618.96px;font-size:16px;color:#111;">in person meeting meeting: <b>2/4/22, Tues, 10:30 am</b></div>
<div class="t" style="top:596.70px;font-size:15px;font-weight:400;color:#777;letter-spacing:0.15px;right:172.5px;">Next Week</div>
<svg style="position:absolute;left:508px;top:667px;" width="48" height="48" viewBox="0 0 100 100"><defs><clipPath id="cc3"><circle cx="50" cy="50" r="50"/></clipPath><filter id="fj3" x="-5%" y="-5%" width="110%" height="110%"><feGaussianBlur stdDeviation="0.55"/></filter>
<linearGradient id="jbg3" x1="0" y1="0" x2="1" y2="0"><stop offset="0" stop-color="#DCDCDC"/><stop offset="1" stop-color="#C9C9C9"/></linearGradient></defs>
<g clip-path="url(#cc3)"><g filter="url(#fj3)">
<rect x="-5" y="-5" width="110" height="110" fill="url(#jbg3)"/>
<path d="M28 40 Q26 6 54 2 Q78 4 80 36 Q82 62 80 80 L62 78 Q50 70 40 66 L30 62 Q26 52 28 40 Z" fill="#4B3227"/>
<path d="M35 32 Q38 12 54 12 Q66 14 65 34 Q66 52 56 58 Q44 60 38 52 Q34 44 35 32 Z" fill="#D3A08C"/>
<path d="M40 44 Q48 50 56 45 Q50 53 40 44 Z" fill="#F4EDEA"/>
<ellipse cx="44" cy="29" rx="3" ry="1.6" fill="#6B4A3C"/><ellipse cx="58" cy="31" rx="3" ry="1.6" fill="#6B4A3C"/>
<path d="M40 56 Q48 64 58 60 L60 70 L40 70 Z" fill="#C89582"/>
<path d="M0 100 V70 Q10 58 30 56 L50 68 L76 62 Q90 64 100 68 V100 Z" fill="#3C7870"/>
<path d="M0 70 Q10 58 30 56 L40 70 L46 100 H0 Z" fill="#3E7C73"/>
<path d="M100 68 Q90 64 76 62 L62 76 L50 100 H100 Z" fill="#3A746C"/>
<path d="M33 68 Q46 72 58 70 L50 92 Q42 80 33 68 Z" fill="#121212"/>
<path d="M64 36 Q70 60 62 80 L72 78 Q80 60 76 38 Z" fill="#3D2820"/>
<path d="M14 66 Q26 80 44 98" stroke="#2C5A54" stroke-width="1.5" fill="none"/>
</g></g></svg>
<div class="t" style="left:570px;top:672.26px;font-size:16px;color:#111;"><b style="color:#0F5CAB;letter-spacing:-0.5px">Jocelyn Stowe</b> | Coordinator</div>
<div class="t" style="left:570px;top:695.66px;font-size:16px;color:#111;">scheduled meeting: <b style="letter-spacing:-0.35px">Tuesday, 10:30 am</b> via Video</div>
<div class="t" style="top:669.80px;font-size:15px;font-weight:400;color:#8C45E0;right:172.5px;">Today</div>
<div style="position:absolute;left:820px;top:732.5px;width:143px;height:28px;border:2px solid #7A2FDF;border-radius:4px;box-sizing:border-box;background:#fff;"></div>
<div class="t" style="top:738.76px;font-size:16px;font-weight:400;color:#7A2FDF;letter-spacing:-0.25px;left:893px;transform:translateX(-50%);-webkit-text-stroke:0.35px #7A2FDF;">Record Update</div>
<div style="position:absolute;left:516px;top:797.5px;width:32px;height:32px;background:#FFDBA8;border-radius:6px;"></div>
<svg style="position:absolute;left:522px;top:804.5px;" width="20" height="18" viewBox="0 0 20 18"><g transform="scale(0.76)"><path d="M1.75 11.3 Q13 16.5 24.15 11.3 V21.95 H1.75 Z" fill="#F8C886"/>
<rect x="1.75" y="4.75" width="22.4" height="17.2" rx="1.6" fill="none" stroke="#E48A00" stroke-width="1.9"/>
<path d="M8.2 4.75 V2.6 Q8.2 0.9 9.9 0.9 H16.7 Q18.4 0.9 18.4 2.6 V4.75" fill="none" stroke="#E48A00" stroke-width="1.9"/>
<path d="M1.75 11.3 Q13 16.5 24.15 11.3" fill="none" stroke="#E48A00" stroke-width="1.9"/>
<line x1="11.4" y1="10.3" x2="14.7" y2="10.3" stroke="#E48A00" stroke-width="1.9" stroke-linecap="round"/></g></svg>
<div class="t" style="top:797.65px;font-size:14px;font-weight:700;color:#7A7A7A;letter-spacing:-0.68px;left:570px;">2 CAREER PATH TASKS COMPLETED</div>
<svg style="position:absolute;left:568px;top:820.5px;" width="20" height="20" viewBox="0 0 20 20"><circle cx="10" cy="10" r="9.8" fill="#2BA836"/><polyline points="5.5,10.3 8.6,13.2 14.5,7" fill="none" stroke="#fff" stroke-width="2" stroke-linecap="round" stroke-linejoin="round"/></svg>
<div class="t" style="top:824.26px;font-size:16px;font-weight:400;color:#111;letter-spacing:-0.3px;left:600.5px;">Update Resume</div>
<svg style="position:absolute;left:568.5px;top:850.5px;" width="20" height="20" viewBox="0 0 20 20"><circle cx="10" cy="10" r="9.8" fill="#2BA836"/><polyline points="5.5,10.3 8.6,13.2 14.5,7" fill="none" stroke="#fff" stroke-width="2" stroke-linecap="round" stroke-linejoin="round"/></svg>
<div class="t" style="top:853.76px;font-size:16px;font-weight:400;color:#111;letter-spacing:-0.07px;left:600.5px;">Obtain Unemployment</div>
<div class="t" style="top:798.30px;font-size:15px;font-weight:400;color:#777;letter-spacing:0.28px;right:172.5px;">1 wk ago</div>
<div style="position:absolute;left:516px;top:906.5px;width:32px;height:32px;background:#EEEEEE;border-radius:6px;"></div>
<svg style="position:absolute;left:522px;top:912px;" width="20" height="20" viewBox="0 0 20 20"><path d="M3.5 17 V8.5 L10 3 L16.5 8.5 V17" fill="none" stroke="#6A6A6A" stroke-width="1.3" stroke-linejoin="round"/>
<rect x="8" y="12" width="4" height="5" fill="none" stroke="#6A6A6A" stroke-width="1.2"/>
<line x1="1.5" y1="17.2" x2="18.5" y2="17.2" stroke="#6A6A6A" stroke-width="1.3"/></svg></svg>
<div class="t" style="top:906.95px;font-size:14px;font-weight:700;color:#7A7A7A;letter-spacing:-0.85px;left:570px;">PROFILE UPDATED</div>
<div class="t" style="top:926.46px;font-size:16px;font-weight:400;color:#111;left:570px;">Started renting at Dobbins Hill</div>
<div class="t" style="top:907.30px;font-size:15px;font-weight:400;color:#777;letter-spacing:0.28px;right:172.5px;">2 wk ago</div>
<svg style="position:absolute;left:508px;top:976px;" width="48" height="48" viewBox="0 0 100 100"><defs><clipPath id="cc4"><circle cx="50" cy="50" r="50"/></clipPath><filter id="fj4" x="-5%" y="-5%" width="110%" height="110%"><feGaussianBlur stdDeviation="0.55"/></filter>
<linearGradient id="jbg4" x1="0" y1="0" x2="1" y2="0"><stop offset="0" stop-color="#DCDCDC"/><stop offset="1" stop-color="#C9C9C9"/></linearGradient></defs>
<g clip-path="url(#cc4)"><g filter="url(#fj4)">
<rect x="-5" y="-5" width="110" height="110" fill="url(#jbg4)"/>
<path d="M28 40 Q26 6 54 2 Q78 4 80 36 Q82 62 80 80 L62 78 Q50 70 40 66 L30 62 Q26 52 28 40 Z" fill="#4B3227"/>
<path d="M35 32 Q38 12 54 12 Q66 14 65 34 Q66 52 56 58 Q44 60 38 52 Q34 44 35 32 Z" fill="#D3A08C"/>
<path d="M40 44 Q48 50 56 45 Q50 53 40 44 Z" fill="#F4EDEA"/>
<ellipse cx="44" cy="29" rx="3" ry="1.6" fill="#6B4A3C"/><ellipse cx="58" cy="31" rx="3" ry="1.6" fill="#6B4A3C"/>
<path d="M40 56 Q48 64 58 60 L60 70 L40 70 Z" fill="#C89582"/>
<path d="M0 100 V70 Q10 58 30 56 L50 68 L76 62 Q90 64 100 68 V100 Z" fill="#3C7870"/>
<path d="M0 70 Q10 58 30 56 L40 70 L46 100 H0 Z" fill="#3E7C73"/>
<path d="M100 68 Q90 64 76 62 L62 76 L50 100 H100 Z" fill="#3A746C"/>
<path d="M33 68 Q46 72 58 70 L50 92 Q42 80 33 68 Z" fill="#121212"/>
<path d="M64 36 Q70 60 62 80 L72 78 Q80 60 76 38 Z" fill="#3D2820"/>
<path d="M14 66 Q26 80 44 98" stroke="#2C5A54" stroke-width="1.5" fill="none"/>
</g></g></svg>
<div class="t" style="left:570px;top:981.26px;font-size:16px;color:#111;"><b style="color:#0F5CAB;letter-spacing:-0.5px">Jocelyn Stowe</b> | Coordinator</div>
<div class="t" style="top:1005.96px;font-size:16px;font-weight:400;color:#111;letter-spacing:-0.13px;left:570px;">Updated Career Path and added 3 new tasks</div>
<div class="t" style="top:980.80px;font-size:15px;font-weight:400;color:#777;letter-spacing:0.18px;right:172.5px;">2 wks ago</div>
</body></html>
